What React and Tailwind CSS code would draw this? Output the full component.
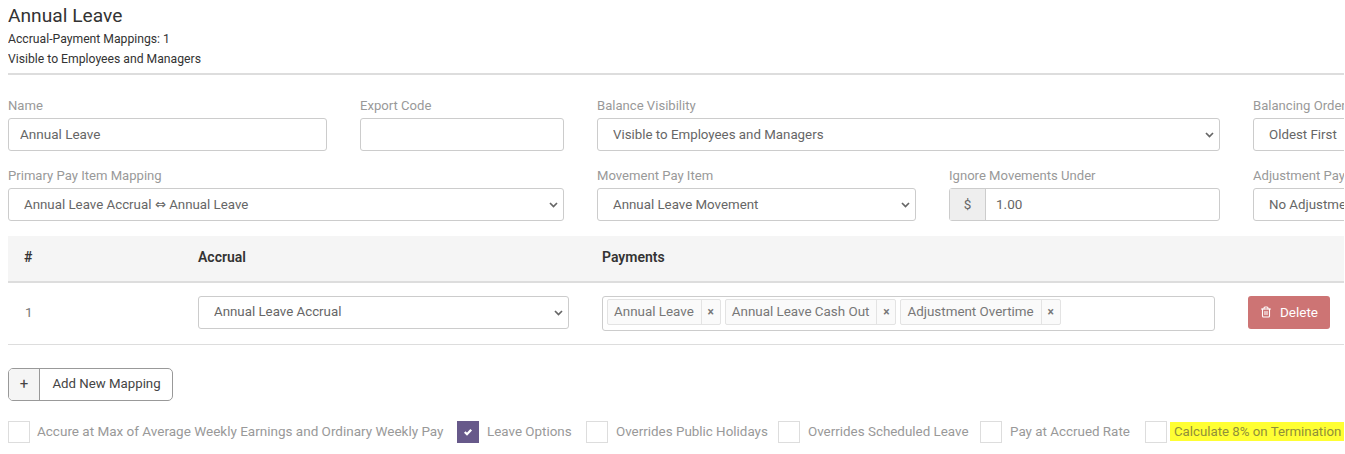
import { Trash2 } from "lucide-react";

const labelCls = "block text-[13.1px] leading-[15px] text-[#999] mb-[5px]";
const fieldCls =
  "h-[33px] w-full rounded-[3px] border border-[#ccc] bg-white px-[11px] pb-[2px] text-[13.5px] text-[#666] outline-none";

function Field({ label, width, children }) {
  return (
    <div className={`shrink-0 ${width}`}>
      <label className={`${labelCls} whitespace-nowrap`}>{label}</label>
      {children}
    </div>
  );
}

function Select({ value, width = "w-full" }) {
  return (
    <div className={`relative ${width}`}>
      <select className="h-[33px] w-full appearance-none rounded-[3px] border border-[#ccc] bg-white pl-[15px] pr-[20px] text-[13.3px] text-[#666] outline-none">
        <option>{value}</option>
      </select>
      <svg className="absolute right-[6px] top-[14px]" width="9" height="6" viewBox="0 0 9 6">
        <path d="M1 1l3.5 3.5L8 1" fill="none" stroke="#666" strokeWidth="1.7" />
      </svg>
    </div>
  );
}

function Tag({ label }) {
  return (
    <span className="flex h-[26px] items-center rounded-[2px] border border-[#e3e3e3] bg-[#fafafa] text-[13.4px] text-[#777]">
      <span className="pl-[6px] pr-[7px]">{label}</span>
      <span className="flex h-full w-[19px] items-center justify-center border-l border-[#e3e3e3] text-[12px] font-bold text-[#777]">
        ×
      </span>
    </span>
  );
}

function Check({ label, width, gap = "mr-[8px]", size = "text-[13.4px]", checked, highlight }) {
  return (
    <div className={`flex shrink-0 items-center ${width}`}>
      <span
        className={`flex h-[22px] w-[22px] shrink-0 items-center justify-center border ${
          checked ? "border-[#67598a] bg-[#67598a]" : "border-[#ddd] bg-white"
        } ${gap}`}
      >
        {checked && (
          <svg width="10" height="10" viewBox="0 0 10 10">
            <path d="M1.8 5 4 7.2 8.2 2.8" fill="none" stroke="#fff" strokeWidth="2.3" />
          </svg>
        )}
      </span>
      <span
        className={`whitespace-nowrap leading-[19px] ${size} ${
          highlight ? "bg-[#ffff33] px-[4px] text-[#8f8f3a]" : "text-[#999]"
        }`}
      >
        {label}
      </span>
    </div>
  );
}

export default function App() {
  return (
    <div className="h-[454px] w-[1345px] bg-white pl-[8px] pr-px font-['Roboto','DejaVu_Sans',sans-serif]">
      <div className="h-full overflow-hidden">
        <h1 className="pt-[5px] text-[19.2px] leading-[22px] text-[#333]">Annual Leave</h1>
        <p className="mt-[5px] text-[12.2px] leading-[14px] text-[#333]">Accrual-Payment Mappings: 1</p>
        <p className="mt-[6px] text-[12.2px] leading-[14px] text-[#333]">Visible to Employees and Managers</p>
        <div className="mt-[7px] h-[2px] bg-[#ddd]" />

        <div className="mt-[23px] flex gap-[33px]">
          <Field label="Name" width="w-[319px]">
            <input className={fieldCls} defaultValue="Annual Leave" />
          </Field>
          <Field label="Export Code" width="w-[204px]">
            <input className={fieldCls} />
          </Field>
          <Field label="Balance Visibility" width="w-[623px]">
            <Select value="Visible to Employees and Managers" />
          </Field>
          <Field label="Balancing Order" width="w-[200px]">
            <Select value="Oldest First" />
          </Field>
        </div>

        <div className="mt-[17px] flex gap-[33px]">
          <Field label="Primary Pay Item Mapping" width="w-[556px]">
            <Select value="Annual Leave Accrual ⇔ Annual Leave" />
          </Field>
          <Field label="Movement Pay Item" width="w-[319px]">
            <Select value="Annual Leave Movement" />
          </Field>
          <Field label="Ignore Movements Under" width="w-[271px]">
            <div className="flex h-[33px] rounded-[3px] border border-[#ccc]">
              <span className="flex w-[36px] items-center justify-center border-r border-[#ccc] bg-[#eee] text-[13.5px] text-[#666]">
                $
              </span>
              <input className="w-0 flex-1 px-[10px] text-[13.5px] text-[#666] outline-none" defaultValue="1.00" />
            </div>
          </Field>
          <Field label="Adjustment Pay Item" width="w-[200px]">
            <Select value="No Adjustment Pay Item" />
          </Field>
        </div>

        <table className="mt-[15px] w-full table-fixed border-collapse">
          <thead>
            <tr className="h-[46px] border-b-2 border-[#ddd] bg-[#f5f5f5] text-left text-[14px] text-[#333]">
              <th className="w-[190px] pb-[2px] pl-[16px] font-semibold">#</th>
              <th className="w-[404px] pb-[2px] font-semibold">Accrual</th>
              <th className="w-[646px] pb-[2px] font-semibold">Payments</th>
              <th />
            </tr>
          </thead>
          <tbody>
            <tr className="h-[62px] border-b border-[#ddd] text-[13.5px] text-[#777]">
              <td className="pb-[2px] pl-[17px]">1</td>
              <td className="pb-[2px]">
                <Select value="Annual Leave Accrual" width="w-[371px]" />
              </td>
              <td>
                <div className="flex h-[35px] w-[613px] items-center gap-[4px] rounded-[3px] border border-[#ccc] pb-[2px] pl-[4px]">
                  <Tag label="Annual Leave" />
                  <Tag label="Annual Leave Cash Out" />
                  <Tag label="Adjustment Overtime" />
                </div>
              </td>
              <td className="pb-[2px]">
                <button className="flex h-[33px] w-[82px] items-center justify-center gap-[8px] rounded-[3px] bg-[#cd7474] text-[13.5px] text-white">
                  <Trash2 size={12} strokeWidth={2.2} />
                  Delete
                </button>
              </td>
            </tr>
          </tbody>
        </table>

        <div className="mt-[23px] flex h-[33px] w-[165px] rounded-[5px] border border-[#999] text-[13.25px] text-[#444]">
          <span className="flex w-[31px] items-center justify-center rounded-l-[4px] border-r border-[#999] bg-[#f5f5f5] text-[15px]">
            +
          </span>
          <span className="flex flex-1 items-center justify-center pl-[1px]">Add New Mapping</span>
        </div>

        <div className="mt-[20px] flex items-center">
          <Check width="w-[449px]" gap="mr-[7px]" size="text-[13.5px]" label="Accure at Max of Average Weekly Earnings and Ordinary Weekly Pay" />
          <Check width="w-[129px]" label="Leave Options" checked />
          <Check width="w-[192px]" label="Overrides Public Holidays" />
          <Check width="w-[202px]" label="Overrides Scheduled Leave" />
          <Check width="w-[165px]" label="Pay at Accrued Rate" />
          <Check width="w-[199px]" gap="mr-[3px]" size="text-[13.25px]" label="Calculate 8% on Termination" highlight />
        </div>
      </div>
    </div>
  );
}
